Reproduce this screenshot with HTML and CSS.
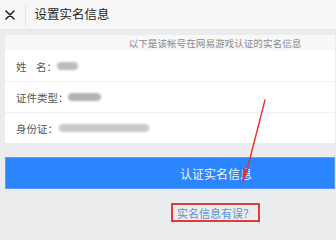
FILE: index.html
```html
<!DOCTYPE html>
<html lang="zh-CN">
<head>
<meta charset="utf-8">
<link rel="stylesheet" href="styles.css">
</head>
<body>
<div class="page">
  <header class="topbar">
    <svg class="close" width="10" height="10" viewBox="0 0 10 10"><path d="M1 1 L9 9 M9 1 L1 9" stroke="#222" stroke-width="1.6" stroke-linecap="round"/></svg>
    <span class="sep"></span>
    <span class="title">设置实名信息</span>
  </header>
  <main class="content">
    <section class="card">
      <div class="notice">以下是该帐号在网易游戏认证的实名信息</div>
      <div class="row"><span class="label"><span class="gap">姓</span>名：</span><span class="blur w1"></span></div>
      <div class="row"><span class="label">证件类型：</span><span class="blur w2"></span></div>
      <div class="row"><span class="label">身份证：</span><span class="blur w3"></span></div>
    </section>
    <button class="submit">认证实名信息</button>
    <div class="linkwrap"><a class="errlink">实名信息有误？</a></div>
  </main>
  <svg class="arrow" width="336" height="228" viewBox="0 0 336 228">
    <path d="M265 100 L246.5 172" stroke="#e5322d" stroke-width="1.4" fill="none" stroke-linecap="round"/>
    <path d="M248.5 170 L242.5 184 L243 168 Z" fill="#e5322d"/>
  </svg>
</div>
</body>
</html>
```
FILE: styles.css
```css
html, body {
  margin: 0;
  padding: 0;
}
body {
  width: 336px;
  height: 228px;
  overflow: hidden;
  background: #ebeced;
  font-family: "Noto Sans CJK SC", "Noto Sans", sans-serif;
}
.page {
  position: relative;
  width: 336px;
  height: 228px;
}
.topbar {
  height: 29px;
  background: #f7f7f7;
  border-bottom: 1px solid #e6e6e6;
  display: flex;
  align-items: center;
}
.close {
  margin-left: 4.5px;
  display: block;
}
.sep {
  width: 1px;
  height: 22px;
  background: #e4e4e4;
  margin-left: 10px;
}
.title {
  margin-left: 9px;
  font-size: 12.5px;
  color: #1f1f1f;
  line-height: 1;
}
.content {
  padding: 5px 1px 0 5px;
}
.card {
  background: #fff;
}
.notice {
  height: 16px;
  line-height: 16px;
  background: #f8f8f8;
  font-size: 9.6px;
  color: #8a8a8a;
  text-align: center;
  padding-left: 90px;
  white-space: nowrap;
}
.row {
  height: 30px;
  display: flex;
  align-items: center;
  padding-left: 11px;
  border-top: 1px solid #f0f0f0;
}
.row:nth-child(2) {
  border-top: none;
}
.label {
  font-size: 10.5px;
  color: #555;
  white-space: nowrap;
}
.gap {
  margin-right: 9.5px;
}
.blur {
  display: inline-block;
  height: 8px;
  background: #bdbdbd;
  border-radius: 4px;
  filter: blur(1.2px);
}
.w1 { width: 21px; }
.w2 { width: 33px; margin-left: -1px; background: #b3b3b3; }
.w3 { width: 90px; margin-left: 1px; background: #cacaca; }
.submit {
  display: block;
  width: 330px;
  height: 32px;
  margin-top: 14px;
  border: 1px solid #5b9dff;
  background: #2b85fe;
  color: #eef4ff;
  font-family: inherit;
  font-size: 12px;
  text-align: center;
  padding: 0 0 0 92px;
}
.linkwrap {
  margin-top: 14px;
  width: 330px;
  padding-left: 91px;
  box-sizing: border-box;
  display: flex;
  justify-content: center;
}
.errlink {
  display: inline-block;
  height: 19px;
  line-height: 17px;
  box-sizing: border-box;
  border: 2px solid #e53935;
  padding: 0 4px;
  font-size: 11px;
  color: #5592dc;
  white-space: nowrap;
}
.arrow {
  position: absolute;
  left: 0;
  top: 0;
  pointer-events: none;
}
```
